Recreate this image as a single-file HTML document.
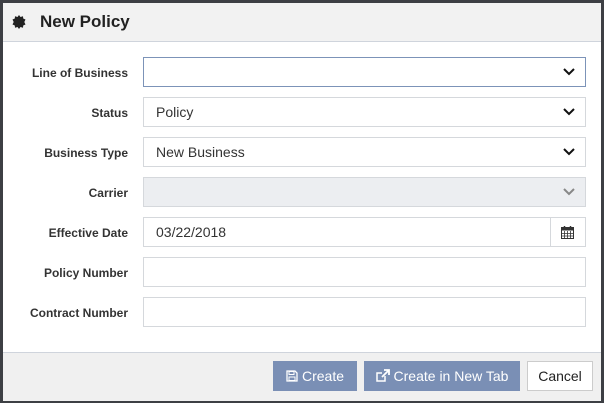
<!DOCTYPE html><html><head><style>
body{margin:0;width:604px;height:403px;background:#3d3f44;font-family:"Liberation Sans",sans-serif;overflow:hidden;position:relative}
.m{position:absolute;left:3px;top:3px;width:598px;height:397px;background:#fff;}
.h{height:38px;background:#f2f2f2;border-bottom:1px solid #cfd4dc;position:relative}
.h span{position:absolute;left:37px;top:9px;font-size:17px;font-weight:bold;color:#222}
.h svg{position:absolute;left:9px;top:12px}
.r{position:absolute;left:0;width:598px;height:30px}
.l{position:absolute;right:473px;top:9px;font-size:12px;font-weight:bold;color:#333;white-space:nowrap}
.i{position:absolute;left:140px;height:28px;border:1px solid #d5d8dc;background:#fff;font-size:14px;color:#333;line-height:28px;padding-left:12px;box-sizing:content-box;width:429px}
.i svg{position:absolute;right:10px;top:10px}
.f{position:absolute;left:0;top:349px;width:598px;height:48px;background:#f0f0f0;border-top:1px solid #cfd4dc}
.b{position:absolute;top:8px;height:30px;line-height:30px;font-size:14px;color:#fff;background:#7a8fb5;text-align:center}
</style></head><body>
<div class="m">
<div class="h"><svg width="14" height="14" viewBox="0 0 14 14"><polygon fill="#222" points="7,0 8.5,2 11,1.2 11.2,3.5 13.5,4.5 12.3,7 13.5,9.5 11.2,10.5 11,12.8 8.5,12 7,14 5.5,12 3,12.8 2.8,10.5 .5,9.5 1.7,7 .5,4.5 2.8,3.5 3,1.2 5.5,2"/></svg><span>New Policy</span></div>
<div class="r" style="top:54px"><div class="l">Line of Business</div><div class="i" style="border-color:#7c93b8"><svg width="12" height="8"><path d="M1 1l5 5 5-5" stroke="#111" stroke-width="2" fill="none"/></svg></div></div>
<div class="r" style="top:94px"><div class="l">Status</div><div class="i">Policy<svg width="12" height="8"><path d="M1 1l5 5 5-5" stroke="#111" stroke-width="2" fill="none"/></svg></div></div>
<div class="r" style="top:134px"><div class="l">Business Type</div><div class="i">New Business<svg width="12" height="8"><path d="M1 1l5 5 5-5" stroke="#111" stroke-width="2" fill="none"/></svg></div></div>
<div class="r" style="top:174px"><div class="l">Carrier</div><div class="i" style="background:#eceef1"><svg width="12" height="8"><path d="M1 1l5 5 5-5" stroke="#888" stroke-width="2" fill="none"/></svg></div></div>
<div class="r" style="top:214px"><div class="l">Effective Date</div><div class="i">03/22/2018<div style="position:absolute;right:0;top:0;width:34px;height:28px;border-left:1px solid #d5d8dc"><svg width="13" height="13" viewBox="0 0 13 13" style="position:absolute;left:10px;top:8px"><rect x=".5" y="1.5" width="12" height="11" fill="none" stroke="#333"/><rect x=".5" y="1.5" width="12" height="3" fill="#333"/><path d="M1 7.5h11M1 10h11M3.5 5v7M6.5 5v7M9.5 5v7" stroke="#333" stroke-width=".8"/><path d="M3.5 0v3M9.5 0v3" stroke="#333" stroke-width="1.5"/></svg></div></div></div>
<div class="r" style="top:254px"><div class="l">Policy Number</div><div class="i"></div></div>
<div class="r" style="top:294px"><div class="l">Contract Number</div><div class="i"></div></div>
<div class="f">
<div class="b" style="left:270px;width:84px"><svg width="12" height="12" viewBox="0 0 12 12" style="vertical-align:-1px;margin-right:4px"><path d="M1 1h8l2 2v8H1z" fill="none" stroke="#fff" stroke-width="1.3"/><rect x="3" y="1.5" width="5" height="3" fill="none" stroke="#fff"/><rect x="3" y="7" width="6" height="3.5" fill="none" stroke="#fff"/></svg>Create</div>
<div class="b" style="left:361px;width:156px"><svg width="14" height="13" viewBox="0 0 14 13" style="vertical-align:-1px;margin-right:4px"><path d="M9 7v5H1V4h5" fill="none" stroke="#fff" stroke-width="1.5"/><path d="M8 1h5v5M13 1L6 8" fill="none" stroke="#fff" stroke-width="1.8"/></svg>Create in New Tab</div>
<div class="b" style="left:524px;width:64px;background:#fff;color:#222;border:1px solid #ccc;height:28px;line-height:28px">Cancel</div>
</div>
</div>
</body></html>
